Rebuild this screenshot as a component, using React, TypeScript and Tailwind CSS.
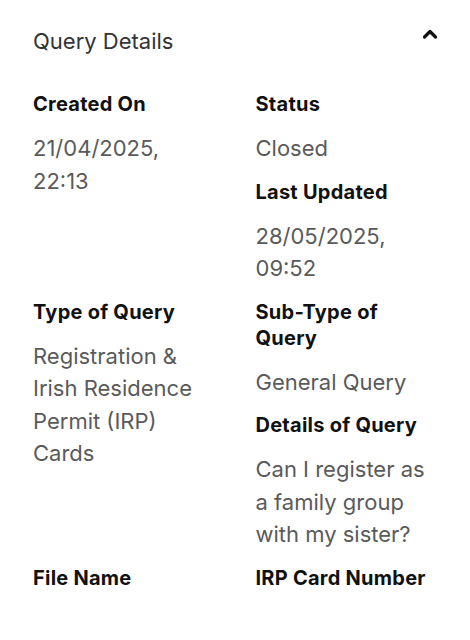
import React from "react";

type Field = { label: string; value?: string };

const rows: Field[][][] = [
  [
    [{ label: "Created On", value: "21/04/2025, 22:13" }],
    [
      { label: "Status", value: "Closed" },
      { label: "Last Updated", value: "28/05/2025, 09:52" },
    ],
  ],
  [
    [{ label: "Type of Query", value: "Registration & Irish Residence Permit (IRP) Cards" }],
    [
      { label: "Sub-Type of\nQuery", value: "General Query" },
      { label: "Details of Query", value: "Can I register as a family group with my sister?" },
    ],
  ],
  [[{ label: "File Name" }], [{ label: "IRP Card Number" }]],
];

function DetailField({ label, value }: Field) {
  return (
    <div className="flex flex-col">
      <p className="whitespace-pre-line text-[20px] font-bold leading-[26px] tracking-[0.25px] text-[#111]">
        {label}
      </p>
      {value && (
        <p className="mt-[15px] text-[22px] leading-[32.5px] text-[#5a5a5a]">{value}</p>
      )}
    </div>
  );
}

export default function App() {
  return (
    <div className="min-h-[640px] w-[470px] bg-white font-['Inter',sans-serif]">
      {/* Header */}
      <div className="flex items-center justify-between pl-[33px] pr-[32px] pt-[26px]">
        <h1 className="text-[22px] leading-[30px] text-[#333]">Query Details</h1>
        <svg width="16" height="12" viewBox="0 0 16 12" className="-mt-[15px]">
          <path
            d="M2.5 9 L8 3.5 L13.5 9"
            fill="none"
            stroke="#111"
            strokeWidth="3.2"
            strokeLinecap="round"
            strokeLinejoin="round"
          />
        </svg>
      </div>

      {/* Details grid */}
      <div className="mt-[35px] flex flex-col gap-[14px] pl-[33px] pr-[30px]">
        {rows.map((row, i) => (
          <div key={i} className="grid grid-cols-2 gap-x-[38px]">
            {row.map((col, j) => (
              <div key={j} className="flex flex-col gap-[14px]">
                {col.map((f) => (
                  <DetailField key={f.label} {...f} />
                ))}
              </div>
            ))}
          </div>
        ))}
      </div>
    </div>
  );
}
